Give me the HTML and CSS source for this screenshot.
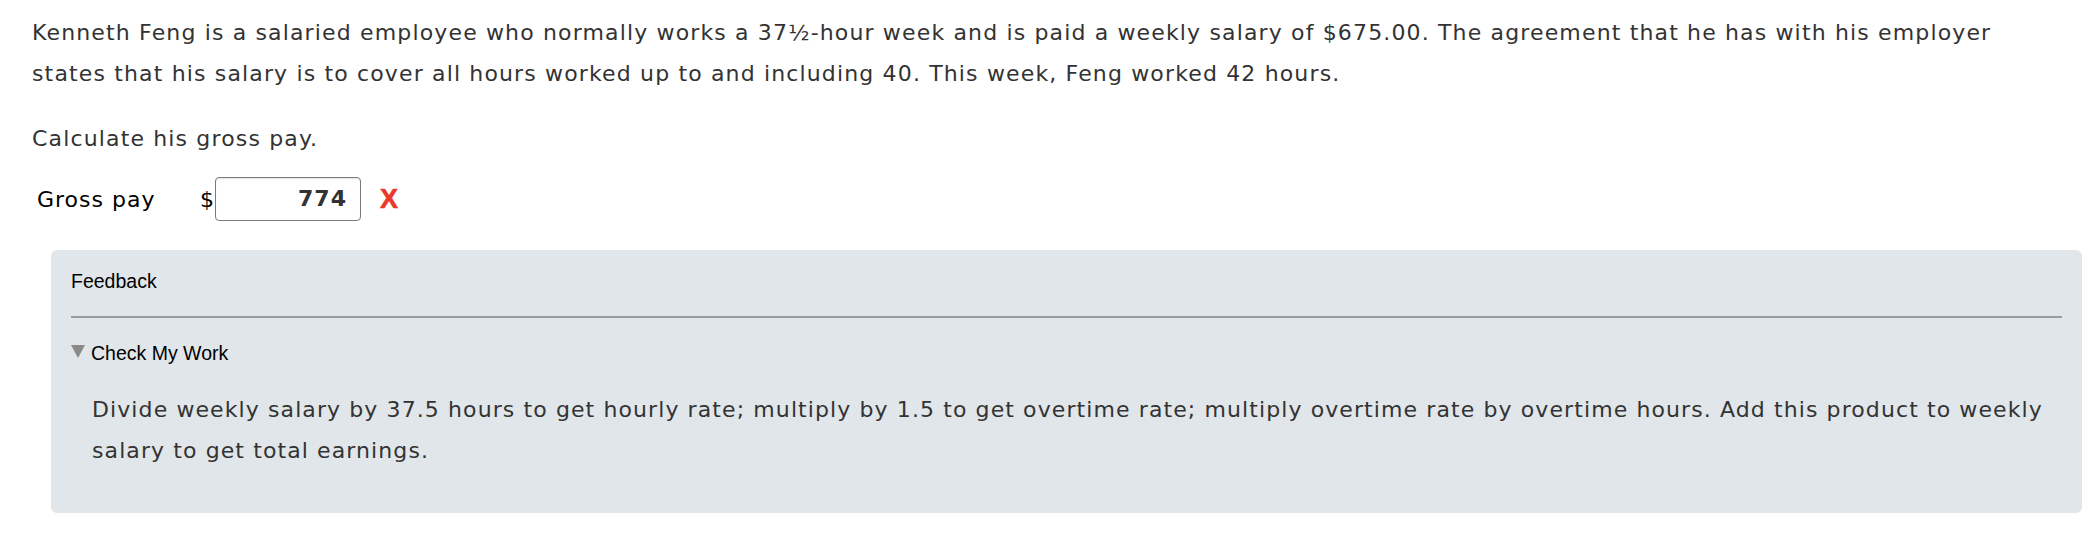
FILE: index.html
```html
<!DOCTYPE html>
<html>
<head>
<meta charset="utf-8">
<link rel="stylesheet" href="styles.css">
</head>
<body>
<div class="page">
  <p class="question">Kenneth Feng is a salaried employee who normally works a 37½-hour week and is paid a weekly salary of $675.00. The agreement that he has with his employer states that his salary is to cover all hours worked up to and including 40. This week, Feng worked 42 hours.</p>
  <p class="question calc">Calculate his gross pay.</p>
  <div class="answer-row">
    <span class="label">Gross pay</span>
    <span class="dollar">$</span>
    <span class="input">774</span>
    <span class="wrong">X</span>
  </div>
  <div class="feedback">
    <div class="fb-title">Feedback</div>
    <div class="rule"></div>
    <div class="cmw"><span class="tri"></span>Check My Work</div>
    <p class="hint">Divide weekly salary by 37.5 hours to get hourly rate; multiply by 1.5 to get overtime rate; multiply overtime rate by overtime hours. Add this product to weekly salary to get total earnings.</p>
  </div>
</div>
</body>
</html>
```
FILE: styles.css
```css
html, body {
  margin: 0;
  padding: 0;
  background: #ffffff;
}
.page {
  padding-left: 32px;
  padding-right: 0;
  font-family: "DejaVu Sans", Verdana, sans-serif;
}
.question {
  margin: 12px 0 0 0;
  font-size: 22px;
  line-height: 41px;
  letter-spacing: 1.15px;
  color: #333333;
  max-width: 2010px;
}
.calc {
  margin-top: 24px;
}
.answer-row {
  display: flex;
  align-items: center;
  margin-top: 18px;
  height: 44px;
}
.label {
  width: 163px;
  margin-left: 5px;
  font-size: 22px;
  letter-spacing: 1px;
  color: #000000;
}
.dollar {
  width: 15px;
  font-size: 22px;
  color: #000000;
}
.input {
  box-sizing: border-box;
  width: 146px;
  height: 44px;
  border: 1.5px solid #7a7a7a;
  border-radius: 4px;
  text-align: right;
  padding-right: 13px;
  font-weight: bold;
  font-size: 22px;
  letter-spacing: 1px;
  line-height: 41px;
  color: #333333;
  box-shadow: inset 0 1px 1px rgba(0,0,0,0.1);
}
.wrong {
  margin-left: 19px;
  font-family: "Liberation Sans", Arial, sans-serif;
  font-weight: bold;
  font-size: 27px;
  color: #e8392b;
  -webkit-text-stroke: 0.6px #e8392b;
}
.feedback {
  margin: 29px 12px 0 19px;
  background: #e0e6e9;
  border-radius: 6px;
  padding: 20px 20px 42px 20px;
  font-family: "Liberation Sans", Arial, sans-serif;
}
.fb-title {
  font-size: 19.5px;
  color: #000000;
}
.rule {
  margin-top: 23px;
  height: 2px;
  background: #9a9c9e;
}
.cmw {
  margin-top: 24px;
  display: flex;
  align-items: center;
  font-size: 19.5px;
  color: #000000;
}
.tri {
  width: 0;
  height: 0;
  border-left: 7px solid transparent;
  border-right: 7px solid transparent;
  border-top: 13px solid #8a8a8a;
  margin-right: 6px;
  margin-top: -4px;
}
.hint {
  margin: 24px 0 0 21px;
  font-family: "DejaVu Sans", Verdana, sans-serif;
  font-size: 22px;
  line-height: 41px;
  letter-spacing: 1.1px;
  color: #333333;
}
```
